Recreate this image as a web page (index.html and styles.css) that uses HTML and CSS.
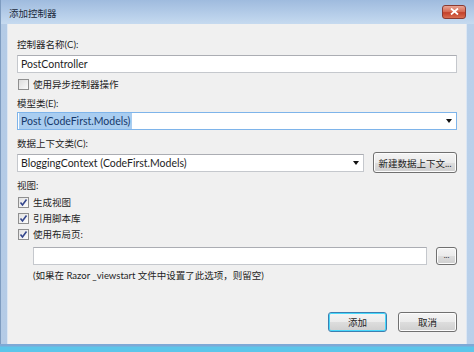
FILE: index.html
```html
<!DOCTYPE html>
<html lang="zh-CN">
<head>
    <meta charset="UTF-8">
    <title>添加控制器</title>
    <link rel="stylesheet" href="styles.css">
</head>
<body>
    <div class="window">
        <div class="titlebar">
            <span class="title">添加控制器</span>
            <span class="close">
                <svg width="9" height="7" viewBox="0 0 9 7"><path d="M1 0.5 L8 6.5 M8 0.5 L1 6.5" stroke="#fff" stroke-width="1.8"/></svg>
            </span>
        </div>

        <div class="client">
            <div class="label">控制器名称(C):</div>
            <div class="field text">PostController</div>

            <div class="check-row first">
                <span class="box"></span>
                <span>使用异步控制器操作</span>
            </div>

            <div class="label gap6">模型类(E):</div>
            <div class="field combo focused">
                <span class="selected">Post (CodeFirst.Models)</span>
                <span class="arrow"></span>
            </div>

            <div class="label gap7">数据上下文类(C):</div>
            <div class="row">
                <div class="field combo grow">
                    <span>BloggingContext (CodeFirst.Models)</span>
                    <span class="arrow"></span>
                </div>
                <button class="btn wide">新建数据上下文...</button>
            </div>

            <div class="label gap6">视图:</div>
            <div class="check-row">
                <span class="box checked"><svg width="9" height="9" viewBox="0 0 9 9"><path d="M1.5 4.5 L3.5 7 L7.5 1.5" fill="none" stroke="#34468c" stroke-width="1.6"/></svg></span>
                <span>生成视图</span>
            </div>
            <div class="check-row">
                <span class="box checked"><svg width="9" height="9" viewBox="0 0 9 9"><path d="M1.5 4.5 L3.5 7 L7.5 1.5" fill="none" stroke="#34468c" stroke-width="1.6"/></svg></span>
                <span>引用脚本库</span>
            </div>
            <div class="check-row">
                <span class="box checked"><svg width="9" height="9" viewBox="0 0 9 9"><path d="M1.5 4.5 L3.5 7 L7.5 1.5" fill="none" stroke="#34468c" stroke-width="1.6"/></svg></span>
                <span>使用布局页:</span>
            </div>

            <div class="indent">
                <div class="row">
                    <div class="field text grow"></div>
                    <button class="btn dots">...</button>
                </div>
                <div class="hint">(如果在 Razor _viewstart 文件中设置了此选项，则留空)</div>
            </div>

            <div class="actions">
                <button class="btn action default">添加</button>
                <button class="btn action">取消</button>
            </div>
        </div>
        <div class="desk"></div>
    </div>
</body>
</html>
```

FILE: styles.css
```css
* {
    margin: 0;
    padding: 0;
    box-sizing: border-box;
}

body {
    font-family: "Lato", "Noto Sans CJK SC", sans-serif;
    font-size: 9.5px;
    color: #1e1e1e;
    background: #5cc6ea;
}

.window {
    width: 474px;
    height: 352px;
    display: flex;
    flex-direction: column;
    background: linear-gradient(to right, #b4cbe6, #c3d7ee 50%, #b9d0ea);
    border-left: 1px solid #7e9cc0;
}

.titlebar {
    height: 24px;
    display: flex;
    align-items: center;
    justify-content: space-between;
    padding: 2px 8px 0 8px;
    background: linear-gradient(#9fbbde, #bad1eb 70%, #c6daef);
}

.title {
    color: #1b2a3c;
    font-size: 9.5px;
}

.close {
    width: 24px;
    height: 14px;
    display: flex;
    align-items: center;
    justify-content: center;
    border: 1px solid #8a3a32;
    border-radius: 3px;
    background: linear-gradient(#e8a596, #d5664f 50%, #c2402a 55%, #d96d51);
    margin-top: -3px;
}

.client {
    flex: 1;
    margin: 0 7px 0 6px;
    padding: 14px 9px 13px 9px;
    background: #f0f0f0;
    border: 1px solid #dde7f3;
    border-top: none;
    display: flex;
    flex-direction: column;
}

.label {
    height: 14px;
    line-height: 14px;
}

.gap6 {
    margin-top: 6px;
}

.gap7 {
    margin-top: 7px;
}

.field {
    height: 18px;
    background: #fff;
    border: 1px solid #c5c8cd;
    border-top-color: #abadb3;
    font-size: 10.5px;
    line-height: 16px;
    padding: 0 3px;
    display: flex;
    align-items: center;
}

.label + .field {
    margin-top: 3px;
}

.combo {
    justify-content: space-between;
    padding-right: 4px;
}

.combo.focused {
    border-color: #7eb4ea;
    padding-left: 1px;
    margin-top: 1px !important;
}

.selected {
    background: #a9cdf0;
    color: #16386a;
    padding: 0 2px;
}

.arrow {
    width: 0;
    height: 0;
    border-left: 3px solid transparent;
    border-right: 3px solid transparent;
    border-top: 4px solid #111;
}

.check-row {
    height: 14px;
    display: flex;
    align-items: center;
    gap: 4px;
    margin-top: 2px;
    padding-left: 1px;
}

.check-row.first {
    margin-top: 4px;
}

.label + .check-row {
    margin-top: 2px;
}

.box {
    width: 11px;
    height: 11px;
    border: 1px solid #8f8f8f;
    background: linear-gradient(135deg, #dcdcdc, #fbfbfb);
    display: flex;
    align-items: center;
    justify-content: center;
}

.box.checked {
    background: linear-gradient(135deg, #e2e2e2, #fdfdfd);
}

.row {
    display: flex;
    align-items: center;
    gap: 9px;
}

.label + .row {
    margin-top: 1px;
}

.grow {
    flex: 1;
}

.btn {
    font-family: inherit;
    font-size: 9.5px;
    color: #1e1e1e;
    border: 1px solid #707070;
    border-radius: 3px;
    background: linear-gradient(#f4f4f4, #ebebeb 50%, #dddddd 51%, #cfcfcf);
    box-shadow: inset 0 0 0 1px #fcfcfc;
}

.btn.wide {
    width: 84px;
    height: 21px;
}

.indent {
    margin-top: 6px;
    padding-left: 16px;
}

.btn.dots {
    width: 21px;
    height: 18px;
    line-height: 10px;
    font-size: 8px;
    padding-bottom: 3px;
}

.hint {
    margin-top: 4px;
    height: 14px;
    line-height: 14px;
}

.actions {
    margin-top: auto;
    display: flex;
    justify-content: flex-end;
    gap: 11px;
}

.btn.action {
    width: 59px;
    height: 20px;
}

.btn.default {
    border-color: #3c7fb1;
    box-shadow: inset 0 0 0 1px #48d8fb;
}

.desk {
    height: 8px;
    margin-top: -2px;
    background: linear-gradient(#7ea9d6 0, #7ea9d6 2px, #5cc6ea 3px);
    margin-left: -1px;
}
```
